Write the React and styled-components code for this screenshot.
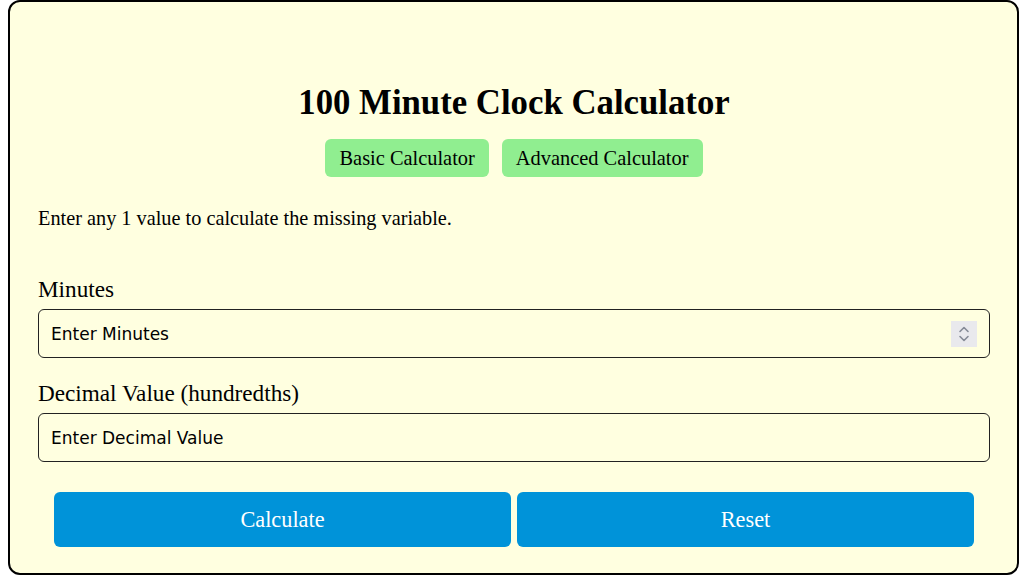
import React from "react";
import styled, { createGlobalStyle } from "styled-components";

const Global = createGlobalStyle`
  html, body { margin: 0; padding: 0; background: #ffffff; }
  body { font-family: "Liberation Serif", "Times New Roman", serif; color: #000; }
  * { box-sizing: border-box; }
`;

const Page = styled.div`
  padding: 0 5px 0 8px;
`;

const Card = styled.div`
  background: #ffffe0;
  border: 2px solid #000;
  border-radius: 12px;
  padding: 81px 27px 25px 28px;
  height: 575px;
`;

const Title = styled.h1`
  margin: 0;
  font-size: 34.75px;
  line-height: 40px;
  font-weight: bold;
  text-align: center;
`;

const NavRow = styled.div`
  display: flex;
  justify-content: center;
  gap: 13px;
  margin-top: 16px;
`;

const NavButton = styled.button`
  background: #90ee90;
  border: none;
  border-radius: 6px;
  padding: 9px 14px;
  font-family: "Liberation Serif", "Times New Roman", serif;
  font-size: 20.4px;
  line-height: 20px;
  color: #000;
  cursor: pointer;
`;

const Intro = styled.p`
  margin: 29px 0 0;
  font-size: 20.3px;
  line-height: 24px;
`;

const Form = styled.div`
  display: flex;
  flex-direction: column;
  gap: 22px;
  margin-top: 46px;
`;

const Field = styled.div`
  display: flex;
  flex-direction: column;
  gap: 7px;
`;

const Label = styled.label`
  font-size: 23.2px;
  line-height: 26px;
`;

const InputWrap = styled.div`
  position: relative;
`;

const Input = styled.input`
  width: 100%;
  height: 49px;
  border: 1px solid #222;
  border-radius: 6px;
  background: transparent;
  padding: 0 12px;
  font-family: "DejaVu Sans", Verdana, sans-serif;
  font-size: 17px;
  color: #000;
  outline: none;
  &::placeholder { color: #000; opacity: 1; }
  &::-webkit-inner-spin-button, &::-webkit-outer-spin-button {
    -webkit-appearance: none;
    margin: 0;
  }
  -moz-appearance: textfield;
`;

const Spinner = styled.div`
  position: absolute;
  right: 13px;
  top: 12px;
  width: 26px;
  height: 26px;
  background: #e9e9ed;
  display: flex;
  align-items: center;
  justify-content: center;
  pointer-events: none;
`;

const ButtonRow = styled.div`
  display: grid;
  grid-template-columns: 1fr 1fr;
  gap: 6px;
  margin: 30px 16px 0;
`;

const ActionButton = styled.button`
  height: 55px;
  background: #0093d9;
  border: none;
  border-radius: 6px;
  color: #fff;
  font-family: "Liberation Serif", "Times New Roman", serif;
  font-size: 22.3px;
  cursor: pointer;
`;

export default function App() {
  return (
    <Page>
      <Global />
      <Card>
        <Title>100 Minute Clock Calculator</Title>
        <NavRow>
          <NavButton>Basic Calculator</NavButton>
          <NavButton>Advanced Calculator</NavButton>
        </NavRow>
        <Intro>Enter any 1 value to calculate the missing variable.</Intro>
        <Form>
          <Field>
            <Label htmlFor="minutes">Minutes</Label>
            <InputWrap>
              <Input id="minutes" type="number" placeholder="Enter Minutes" />
              <Spinner>
                <svg width="14" height="20" viewBox="0 0 14 20" fill="none" stroke="#858a96" strokeWidth="1.6" strokeLinecap="round" strokeLinejoin="round">
                  <path d="M3 7.5 L7 3.5 L11 7.5" />
                  <path d="M3 12.5 L7 16.5 L11 12.5" />
                </svg>
              </Spinner>
            </InputWrap>
          </Field>
          <Field>
            <Label htmlFor="decimal">Decimal Value (hundredths)</Label>
            <InputWrap>
              <Input id="decimal" type="text" placeholder="Enter Decimal Value" />
            </InputWrap>
          </Field>
        </Form>
        <ButtonRow>
          <ActionButton>Calculate</ActionButton>
          <ActionButton>Reset</ActionButton>
        </ButtonRow>
      </Card>
    </Page>
  );
}
